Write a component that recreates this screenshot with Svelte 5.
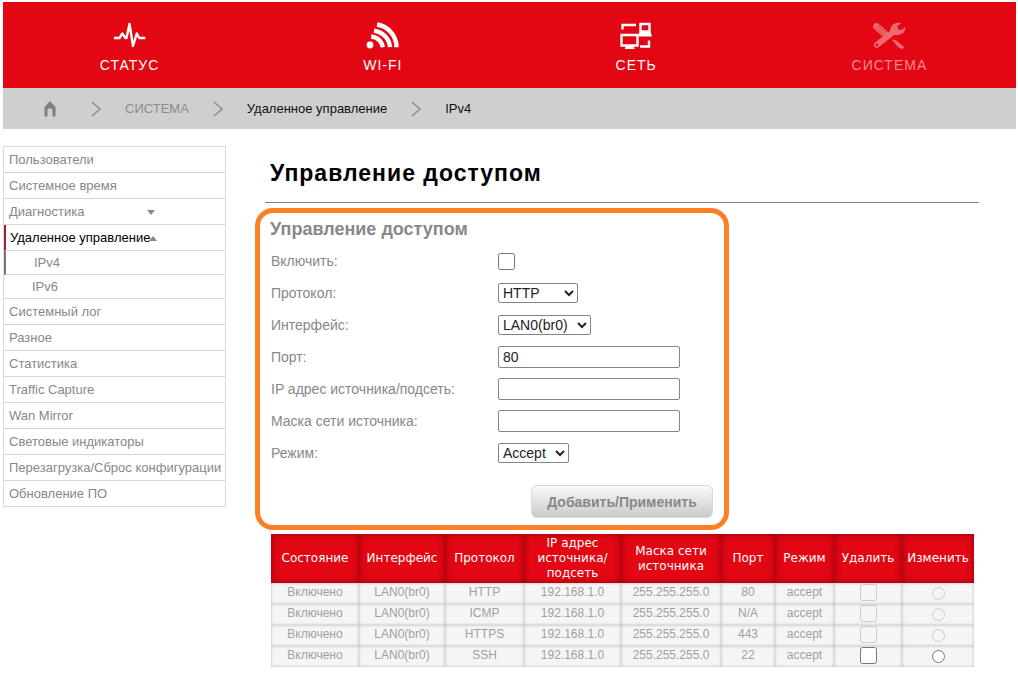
<script>
    const sections = [
        { id: 'status', name: 'СТАТУС' },
        { id: 'wifi', name: 'WI-FI' },
        { id: 'net', name: 'СЕТЬ' },
        { id: 'system', name: 'СИСТЕМА' }
    ]

    const menu = [
        { name: 'Пользователи' },
        { name: 'Системное время' },
        { name: 'Диагностика', arrow: 'down' },
        { name: 'Удаленное управление', arrow: 'up', active: true, children: ['IPv4', 'IPv6'] },
        { name: 'Системный лог' },
        { name: 'Разное' },
        { name: 'Статистика' },
        { name: 'Traffic Capture' },
        { name: 'Wan Mirror' },
        { name: 'Световые индикаторы' },
        { name: 'Перезагрузка/Сброс конфигурации' },
        { name: 'Обновление ПО' }
    ]

    const path = ['СИСТЕМА', 'Удаленное управление', 'IPv4']

    const columns = [
        { id: 'state', title: 'Состояние' },
        { id: 'iface', title: 'Интерфейс' },
        { id: 'proto', title: 'Протокол' },
        { id: 'source', title: 'IP адрес источника/ подсеть' },
        { id: 'mask', title: 'Маска сети источника' },
        { id: 'port', title: 'Порт' },
        { id: 'mode', title: 'Режим' },
        { id: 'remove', title: 'Удалить' },
        { id: 'edit', title: 'Изменить' }
    ]

    const rules = [
        { proto: 'HTTP', port: '80', locked: true },
        { proto: 'ICMP', port: 'N/A', locked: true },
        { proto: 'HTTPS', port: '443', locked: true },
        { proto: 'SSH', port: '22', locked: false }
    ]

    let current = 'system'
    let enabled = false
    let protocol = 'HTTP'
    let iface = 'LAN0(br0)'
    let port = '80'
    let sourceIp = ''
    let sourceMask = ''
    let mode = 'Accept'
</script>

<div class="page">
    <nav class="top">
        {#each sections as section}
            <a href="#{section.id}" class:current={section.id === current}>
                <svg width="34" height="28" viewBox="0 0 34 28" aria-hidden="true">
                    {#if section.id === 'status'}
                        <path class="line" d="M1 16h5.500l2.800-4.500 3.200 4.500h1L16.500 2l3.500 22 3.800-12.500 2.500 4.500h6" />
                    {:else if section.id === 'wifi'}
                        <circle class="solid" cx="4" cy="23" r="3.400" />
                        <path class="wave" d="M5.200 14.800a11.500 11.500 0 0 1 11.500 10.400M8 8.700A18 18 0 0 1 24 25.200M11 2.500A23 23 0 0 1 30.500 25.200" />
                    {:else if section.id === 'net'}
                        <path class="cable" d="M3.500 7.500V3H17M30 18.500V24.500h-9" />
                        <path class="box" d="M21.500 2h9v7.500h-9zM2.500 13h16v10.500h-16z" />
                        <path class="solid" d="M20.500 9.500h11l1.500 5H19zM6.500 24h8v1.500h1V27h-9.500v-1.500h.5z" />
                    {:else}
                        <path class="handle" d="m4.500 4.500 9 8" />
                        <path class="groove" d="m4 6 8.500 7.500M6 3.500l8.500 7.500" />
                        <path class="solid" d="m19.500 17.500 4 .5 9 7.300-2.500 2-4-2.300z" />
                        <path class="shaft" d="M4.800 22.800 22 9.500" />
                        <path class="solid" d="M18.500 10.500q-1-6 3.500-8.800 3.300-1.700 7.500-.7L25.500 4l.8 3.400 3.500.6 3.500-3.500q.6 5-3.300 7.300-4 2-7.500 1z" />
                        <circle class="hole" cx="4.800" cy="22.800" r="1.400" />
                    {/if}
                </svg>
                <span>{section.name}</span>
            </a>
        {/each}
    </nav>

    <nav class="crumbs" aria-label="Навигация">
        <a class="home" href="#home" aria-label="Домой">
            <svg width="12" height="16" viewBox="0 0 12 16"><path d="M6 0 11.500 6v9.500h-3V9.800a2.500 2.500 0 0 0-5 0v5.700h-3V6z" /></svg>
        </a>
        {#each path as step, i}
            <svg class="chevron" width="10" height="16" viewBox="0 0 10 16" aria-hidden="true"><path d="m1 1 8 7-8 7" /></svg>
            <a href="#crumb{i}" class:muted={i === 0}>{step}</a>
        {/each}
    </nav>

    <div class="body">
        <ul class="menu">
            {#each menu as item}
                <li class:active={item.active}>
                    <a href="#menu">
                        {item.name}
                        {#if item.arrow}
                            <span class="arrow {item.arrow}"></span>
                        {/if}
                    </a>
                </li>
                {#if item.children}
                    {#each item.children as child, i}
                        <li class="sub" class:chosen={i === 0}><a href="#{child}">{child}</a></li>
                    {/each}
                {/if}
            {/each}
        </ul>

        <main>
            <h1>Управление доступом</h1>

            <form on:submit|preventDefault>
                <h2>Управление доступом</h2>
                <div class="fields">
                    <label for="enabled">Включить:</label>
                    <input id="enabled" type="checkbox" bind:checked={enabled} />

                    <label for="protocol">Протокол:</label>
                    <select id="protocol" bind:value={protocol}>
                        <option>HTTP</option>
                        <option>HTTPS</option>
                        <option>ICMP</option>
                        <option>SSH</option>
                    </select>

                    <label for="iface">Интерфейс:</label>
                    <select id="iface" bind:value={iface}>
                        <option>LAN0(br0)</option>
                    </select>

                    <label for="port">Порт:</label>
                    <input id="port" type="text" bind:value={port} />

                    <label for="ip">IP адрес источника/подсеть:</label>
                    <input id="ip" type="text" bind:value={sourceIp} />

                    <label for="mask">Маска сети источника:</label>
                    <input id="mask" type="text" bind:value={sourceMask} />

                    <label for="mode">Режим:</label>
                    <select id="mode" bind:value={mode}>
                        <option>Accept</option>
                        <option>Drop</option>
                    </select>
                </div>
                <button type="submit">Добавить/Применить</button>
            </form>

            <table>
                <colgroup>
                    {#each columns as column}
                        <col class={column.id} />
                    {/each}
                </colgroup>
                <thead>
                    <tr>
                        {#each columns as column}
                            <th>{column.title}</th>
                        {/each}
                    </tr>
                </thead>
                <tbody>
                    {#each rules as rule}
                        <tr>
                            <td>Включено</td>
                            <td>LAN0(br0)</td>
                            <td>{rule.proto}</td>
                            <td>192.168.1.0</td>
                            <td>255.255.255.0</td>
                            <td>{rule.port}</td>
                            <td>accept</td>
                            <td><input type="checkbox" aria-label="Удалить {rule.proto}" disabled={rule.locked} /></td>
                            <td><input type="radio" name="edit" aria-label="Изменить {rule.proto}" disabled={rule.locked} /></td>
                        </tr>
                    {/each}
                </tbody>
            </table>
        </main>
    </div>
</div>

<style>
    :global(body) {
        background: #fff;
    }
    .page {
        padding: 2px 2px 12px 3px;
        font-family: "Liberation Sans", Arial, sans-serif;
        font-size: 13px;
        color: #888;
    }
    a {
        color: inherit;
        text-decoration: none;
    }

    .top {
        display: flex;
        height: 86px;
        background: #e30613;
        color: #fff;
    }
    .top a {
        flex: 1;
        display: flex;
        flex-direction: column;
        align-items: center;
        gap: 6px;
        padding-top: 20px;
        font-size: 14px;
        line-height: 18px;
        letter-spacing: 1px;
    }
    .top .current {
        color: #f28a90;
    }
    .top .current svg {
        color: #ee6870;
    }
    .solid {
        fill: currentColor;
    }
    .line, .wave, .cable, .box, .handle, .shaft {
        fill: none;
        stroke: currentColor;
        stroke-width: 2.4;
    }
    .line {
        stroke-linejoin: round;
    }
    .wave {
        stroke-width: 4.4;
    }
    .handle {
        stroke-width: 7;
        stroke-linecap: round;
    }
    .shaft {
        stroke-width: 6;
        stroke-linecap: round;
    }
    .groove {
        stroke: #e30613;
        stroke-width: 0.6;
    }
    .hole {
        fill: #e30613;
    }

    .crumbs {
        display: flex;
        align-items: center;
        gap: 24px;
        height: 41px;
        padding-left: 30px;
        background: #cfcfcf;
        color: #111;
    }
    .home {
        display: flex;
        justify-content: center;
        width: 34px;
    }
    .home path {
        fill: #808080;
    }
    .chevron path {
        fill: none;
        stroke: #909090;
        stroke-width: 1.6;
    }
    .muted {
        color: #8c8c8c;
    }

    .body {
        display: flex;
        align-items: flex-start;
        padding-top: 17px;
    }
    .menu {
        flex: 0 0 223px;
        box-sizing: border-box;
        margin: 0;
        padding: 0;
        list-style: none;
        border: 1px solid #dadada;
        border-bottom: none;
    }
    .menu a {
        display: flex;
        align-items: center;
        position: relative;
        height: 25px;
        padding-left: 5px;
        border-bottom: 1px solid #d6d6d6;
        white-space: nowrap;
    }
    .menu .active a {
        padding-left: 4px;
        border-left: 2px solid #a0203a;
        color: #000;
    }
    .menu .sub a {
        height: 23px;
        padding-left: 28px;
    }
    .menu .chosen a {
        border-left: 2px solid #777;
    }
    .arrow {
        position: absolute;
        top: 11px;
        left: 143px;
        border: 4px solid transparent;
    }
    .down {
        border-top: 5px solid #888;
        border-bottom: none;
    }
    .up {
        border-bottom: 5px solid #888;
        border-top: none;
    }

    main {
        flex: 1;
        margin: 0 37px 0 39px;
    }
    h1 {
        margin: 0 0 5px;
        padding: 9px 5px 11px;
        border-bottom: 1px solid #808080;
        font-size: 23px;
        line-height: 36px;
        letter-spacing: 1px;
        color: #000;
    }
    form {
        width: fit-content;
        margin: 0 0 4px -10px;
        padding: 6px 11px 7px 10px;
        border: 5px solid #ff7f27;
        border-radius: 18px;
    }
    h2 {
        margin: 0 0 6px;
        font-size: 18px;
        line-height: 20px;
    }
    .fields {
        display: grid;
        grid-template-columns: 227px 182px;
        grid-auto-rows: 32px;
        align-items: center;
        justify-items: start;
        padding: 0 33px 0 1px;
        font-size: 14px;
    }
    input[type="text"], select {
        box-sizing: border-box;
        border: 1px solid #858585;
        border-radius: 2px;
        background: #fff;
        font-family: inherit;
        font-size: 14px;
        color: #222;
    }
    input[type="text"] {
        width: 100%;
        height: 22px;
        padding: 0 4px;
    }
    select {
        height: 20px;
        padding: 0 6px 0 0;
    }
    #protocol {
        width: 80px;
    }
    input[type="checkbox"] {
        width: 17px;
        height: 17px;
        margin: 0;
    }
    button {
        display: block;
        width: 182px;
        height: 33px;
        margin: 16px 0 0 auto;
        border: 1px solid #d8d8d8;
        border-radius: 6px;
        background: linear-gradient(#fafafa, #cacaca);
        font-family: inherit;
        font-size: 14px;
        font-weight: bold;
        color: #888;
    }

    table {
        width: calc(100% - 11px);
        margin-left: 6px;
        border-collapse: collapse;
        table-layout: fixed;
        text-align: center;
        font-size: 12px;
        color: #a0a0a0;
    }
    .state { width: 88px; }
    .iface { width: 86px; }
    .proto { width: 79px; }
    .source { width: 97px; }
    .mask { width: 100px; }
    .port { width: 54px; }
    .mode { width: 59px; }
    .remove { width: 68px; }
    .edit { width: 72px; }
    th {
        height: 49px;
        padding: 0;
        background: #e30613;
        box-shadow: inset 0 0 6px #8c0410;
        font-family: "DejaVu Sans", Verdana, sans-serif;
        font-weight: normal;
        font-size: 12px;
        line-height: 15px;
        color: #fff;
    }
    td {
        height: 21px;
        padding: 0 0 2px;
        box-sizing: border-box;
        background: #f5f5f5;
        box-shadow: inset 0 0 3px #b4b4b4;
        line-height: 17px;
    }
    td input {
        display: block;
        margin: 2px auto 0;
    }
    td input[type="checkbox"] {
        margin: 0 auto;
    }
</style>
